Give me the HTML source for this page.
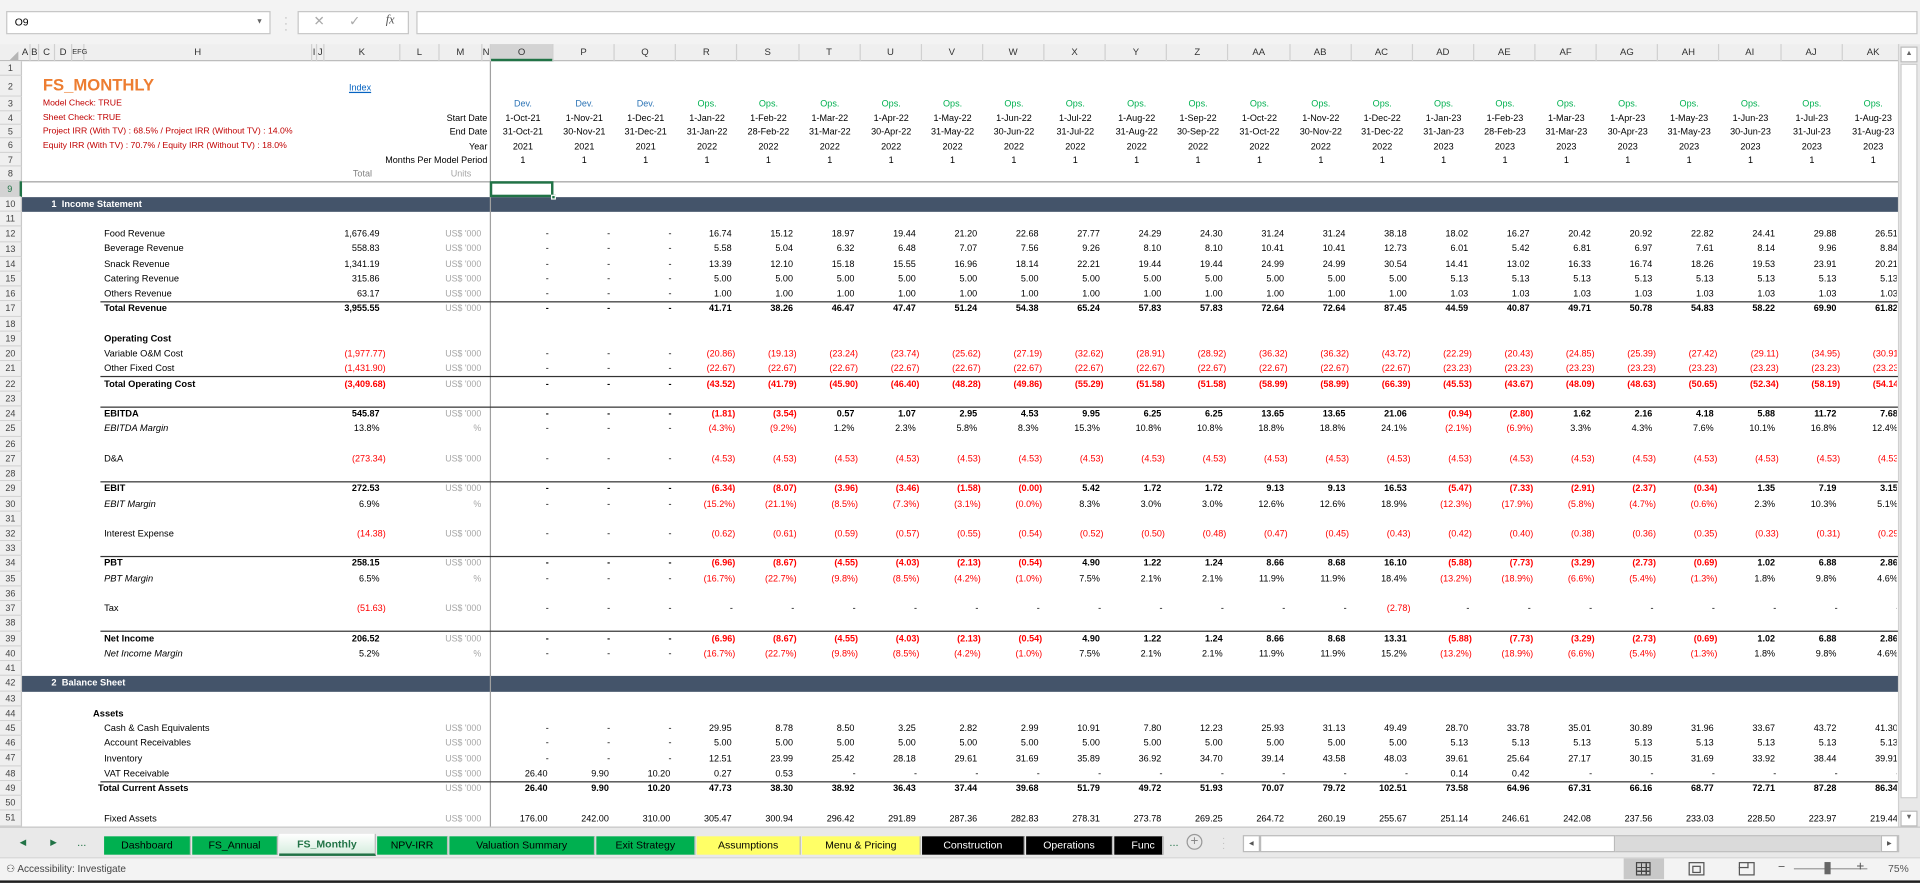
<!DOCTYPE html><html><head><meta charset="utf-8"><style>
*{margin:0;padding:0;box-sizing:border-box}
html,body{width:1920px;height:883px;overflow:hidden;background:#fff}
#w{position:absolute;left:0;top:0;width:1568px;height:721px;transform:scale(1.22449);transform-origin:0 0;font-family:"Liberation Sans",sans-serif;font-size:7.6px;color:#000;overflow:hidden}
.a{position:absolute;white-space:nowrap}
.d{position:absolute;left:402px;display:flex;height:12.24px;line-height:12.24px;width:1147px;overflow:hidden;white-space:nowrap;font-size:7.4px}
.d span,.d em,.d del{display:block;flex:0 0 50.14px;text-align:right;padding-right:5px;font-style:normal;text-decoration:none}
.d em{color:#f00;padding-right:2px}
.d del{padding-right:4px}
.c{height:11.43px;line-height:11.43px}
.c span{text-align:center;padding:0}
.b{font-weight:bold}
.l{position:absolute;left:85px;height:12.24px;line-height:12.24px;white-space:nowrap}
.k{position:absolute;right:1258px;height:12.24px;line-height:12.24px;text-align:right;white-space:nowrap;font-size:7.4px}
.kn{color:#f00;right:1253px}
.u{position:absolute;right:1175px;height:12.24px;line-height:12.24px;color:#a6a6a6;font-size:7.2px;white-space:nowrap}
.ln{position:absolute;left:82px;width:1470px;height:1px;background:#333}
.rh{position:relative;left:0;width:18px;height:12.24px;line-height:12.24px;text-align:center;font-size:7.4px;color:#444;background:#efefef;border-bottom:1px solid #d4d4d4;border-right:1px solid #c8c8c8}
.s{height:11.43px;line-height:11.43px}
.ch{position:absolute;top:36px;height:14px;line-height:14px;text-align:center;font-size:7.8px;color:#333;border-right:1px solid #d0d0d0}
.tab{position:absolute;top:683px;height:15px;line-height:15px;text-align:center;font-size:8.6px;border-right:1px solid #bbb}
.red{color:#c00000;font-size:7.1px;line-height:11.43px}
</style></head><body><div id="w">
<!-- formula bar -->
<div class="a" style="left:0;top:0;width:1568px;height:36px;background:#f3f3f3"></div>
<div class="a" style="left:5px;top:9px;width:216px;height:19px;background:#fff;border:1px solid #c6c6c6;font-size:8.5px;line-height:17px;padding-left:6px">O9</div>
<div class="a" style="left:209px;top:15px;font-size:6px;color:#666">▼</div>
<div class="a" style="left:232px;top:12px;color:#aaa;font-size:9px;line-height:5px">·<br>·<br>·</div>
<div class="a" style="left:243px;top:9px;width:91px;height:19px;background:#fff;border:1px solid #c6c6c6"></div>
<div class="a" style="left:256px;top:11px;font-size:11px;color:#aaa">✕</div>
<div class="a" style="left:285px;top:11px;font-size:11px;color:#aaa">✓</div>
<div class="a" style="left:315px;top:11px;font-size:10px;color:#555;font-style:italic;font-family:'Liberation Serif',serif">fx</div>
<div class="a" style="left:340px;top:9px;width:1226px;height:19px;background:#fff;border:1px solid #c6c6c6"></div>
<!-- column header -->
<div class="a" style="left:0;top:36px;width:1552px;height:14px;background:#efefef;border-bottom:1px solid #bdbdbd"></div>
<div class="a" style="left:401px;top:36px;width:51px;height:14px;background:#d3d3d3;border-bottom:2px solid #217346"></div>
<div class="a" style="left:8px;top:42px;width:0;height:0;border-left:7px solid transparent;border-bottom:7px solid #b5b5b5"></div>
<div class="ch" style="left:17px;width:8px">A</div><div class="ch" style="left:25px;width:7px">B</div><div class="ch" style="left:32px;width:13px">C</div><div class="ch" style="left:45px;width:14px">D</div><div class="ch" style="left:59px;width:10px;font-size:6px">EFG</div><div class="ch" style="left:69px;width:186px">H</div><div class="ch" style="left:255px;width:4px">I</div><div class="ch" style="left:259px;width:6px">J</div><div class="ch" style="left:265px;width:62px">K</div><div class="ch" style="left:327px;width:32px">L</div><div class="ch" style="left:359px;width:35px">M</div><div class="ch" style="left:394px;width:7px">N</div>
<div class="a" style="left:401px;top:36px;display:flex;font-size:7.8px;line-height:14px;color:#333"><span style="width:51px;text-align:center;border-right:1px solid #d0d0d0">O</span><span style="width:50.14px;text-align:center;border-right:1px solid #d0d0d0">P</span><span style="width:50.14px;text-align:center;border-right:1px solid #d0d0d0">Q</span><span style="width:50.14px;text-align:center;border-right:1px solid #d0d0d0">R</span><span style="width:50.14px;text-align:center;border-right:1px solid #d0d0d0">S</span><span style="width:50.14px;text-align:center;border-right:1px solid #d0d0d0">T</span><span style="width:50.14px;text-align:center;border-right:1px solid #d0d0d0">U</span><span style="width:50.14px;text-align:center;border-right:1px solid #d0d0d0">V</span><span style="width:50.14px;text-align:center;border-right:1px solid #d0d0d0">W</span><span style="width:50.14px;text-align:center;border-right:1px solid #d0d0d0">X</span><span style="width:50.14px;text-align:center;border-right:1px solid #d0d0d0">Y</span><span style="width:50.14px;text-align:center;border-right:1px solid #d0d0d0">Z</span><span style="width:50.14px;text-align:center;border-right:1px solid #d0d0d0">AA</span><span style="width:50.14px;text-align:center;border-right:1px solid #d0d0d0">AB</span><span style="width:50.14px;text-align:center;border-right:1px solid #d0d0d0">AC</span><span style="width:50.14px;text-align:center;border-right:1px solid #d0d0d0">AD</span><span style="width:50.14px;text-align:center;border-right:1px solid #d0d0d0">AE</span><span style="width:50.14px;text-align:center;border-right:1px solid #d0d0d0">AF</span><span style="width:50.14px;text-align:center;border-right:1px solid #d0d0d0">AG</span><span style="width:50.14px;text-align:center;border-right:1px solid #d0d0d0">AH</span><span style="width:50.14px;text-align:center;border-right:1px solid #d0d0d0">AI</span><span style="width:50.14px;text-align:center;border-right:1px solid #d0d0d0">AJ</span><span style="width:50.14px;text-align:center">AK</span></div>
<!-- row headers -->
<div class="a" style="left:0;top:49.8px">
<div class="rh" style="height:12.3px;line-height:12.3px">1</div><div class="rh" style="height:17.1px;line-height:17.1px">2</div><div class="rh s">3</div><div class="rh s">4</div><div class="rh s">5</div><div class="rh s">6</div><div class="rh s">7</div><div class="rh s">8</div><div class="rh" style="height:13.1px;line-height:13.1px;background:#d3d3d3;color:#217346;border-right:2px solid #217346">9</div><div class="rh">10</div><div class="rh">11</div><div class="rh">12</div><div class="rh">13</div><div class="rh">14</div><div class="rh">15</div><div class="rh">16</div><div class="rh">17</div><div class="rh">18</div><div class="rh">19</div><div class="rh">20</div><div class="rh">21</div><div class="rh">22</div><div class="rh">23</div><div class="rh">24</div><div class="rh">25</div><div class="rh">26</div><div class="rh">27</div><div class="rh">28</div><div class="rh">29</div><div class="rh">30</div><div class="rh">31</div><div class="rh">32</div><div class="rh">33</div><div class="rh">34</div><div class="rh">35</div><div class="rh">36</div><div class="rh">37</div><div class="rh">38</div><div class="rh">39</div><div class="rh">40</div><div class="rh">41</div><div class="rh">42</div><div class="rh">43</div><div class="rh">44</div><div class="rh">45</div><div class="rh">46</div><div class="rh">47</div><div class="rh">48</div><div class="rh">49</div><div class="rh">50</div><div class="rh">51</div></div>
<!-- section bars -->
<div class="a" style="left:18px;top:160.7px;width:1534px;height:12.24px;background:#44546a;color:#fff;font-weight:bold;font-size:7.6px;line-height:12.24px;padding-left:24px">1&nbsp;&nbsp;Income Statement</div>
<div class="a" style="left:18px;top:552.3px;width:1534px;height:12.24px;background:#44546a;color:#fff;font-weight:bold;font-size:7.6px;line-height:12.24px;padding-left:24px">2&nbsp;&nbsp;Balance Sheet</div>
<!-- freeze lines -->
<div class="a" style="left:18px;top:147.6px;width:1534px;height:1px;background:#a0a0a0"></div>
<div class="a" style="left:400px;top:50px;width:1px;height:625px;background:#a0a0a0"></div>
<!-- selection -->
<div class="a" style="left:400px;top:147.5px;width:52px;height:13.5px;border:2px solid #217346"></div>
<div class="a" style="left:449.5px;top:158.5px;width:4px;height:4px;background:#217346;border:1px solid #fff"></div>
<!-- header texts -->
<div class="a" style="left:35px;top:61.5px;font-size:13.6px;font-weight:bold;color:#ed7d31">FS_MONTHLY</div>
<div class="a" style="left:285px;top:67px;font-size:7.4px;color:#0563c1;text-decoration:underline">Index</div>
<div class="a red" style="left:35px;top:79.2px">Model Check: TRUE<br>Sheet Check: TRUE<br>Project IRR  (With TV) : 68.5%  / Project IRR (Without TV) : 14.0%<br>Equity IRR  (With TV) : 70.7%  / Equity IRR (Without TV) : 18.0%</div>
<div class="a" style="right:1170px;top:90.65px;line-height:11.43px;text-align:right;font-size:7.4px">Start Date<br>End Date<br>Year<br>Months Per Model Period</div>
<div class="a" style="left:265px;top:136.4px;width:62px;text-align:center;color:#808080;font-size:7.4px;line-height:11.43px">Total</div>
<div class="a" style="left:359px;top:136.4px;width:35px;text-align:center;color:#a6a6a6;font-size:7.4px;line-height:11.43px">Units</div>
<div class="d c" style="top:79.2px;color:#00b050"><span style="color:#2e75b6">Dev.</span><span style="color:#2e75b6">Dev.</span><span style="color:#2e75b6">Dev.</span><span>Ops.</span><span>Ops.</span><span>Ops.</span><span>Ops.</span><span>Ops.</span><span>Ops.</span><span>Ops.</span><span>Ops.</span><span>Ops.</span><span>Ops.</span><span>Ops.</span><span>Ops.</span><span>Ops.</span><span>Ops.</span><span>Ops.</span><span>Ops.</span><span>Ops.</span><span>Ops.</span><span>Ops.</span><span>Ops.</span></div>
<div class="d c" style="top:90.65px"><span>1-Oct-21</span><span>1-Nov-21</span><span>1-Dec-21</span><span>1-Jan-22</span><span>1-Feb-22</span><span>1-Mar-22</span><span>1-Apr-22</span><span>1-May-22</span><span>1-Jun-22</span><span>1-Jul-22</span><span>1-Aug-22</span><span>1-Sep-22</span><span>1-Oct-22</span><span>1-Nov-22</span><span>1-Dec-22</span><span>1-Jan-23</span><span>1-Feb-23</span><span>1-Mar-23</span><span>1-Apr-23</span><span>1-May-23</span><span>1-Jun-23</span><span>1-Jul-23</span><span>1-Aug-23</span></div>
<div class="d c" style="top:102.1px"><span>31-Oct-21</span><span>30-Nov-21</span><span>31-Dec-21</span><span>31-Jan-22</span><span>28-Feb-22</span><span>31-Mar-22</span><span>30-Apr-22</span><span>31-May-22</span><span>30-Jun-22</span><span>31-Jul-22</span><span>31-Aug-22</span><span>30-Sep-22</span><span>31-Oct-22</span><span>30-Nov-22</span><span>31-Dec-22</span><span>31-Jan-23</span><span>28-Feb-23</span><span>31-Mar-23</span><span>30-Apr-23</span><span>31-May-23</span><span>30-Jun-23</span><span>31-Jul-23</span><span>31-Aug-23</span></div>
<div class="d c" style="top:113.5px"><span>2021</span><span>2021</span><span>2021</span><span>2022</span><span>2022</span><span>2022</span><span>2022</span><span>2022</span><span>2022</span><span>2022</span><span>2022</span><span>2022</span><span>2022</span><span>2022</span><span>2022</span><span>2023</span><span>2023</span><span>2023</span><span>2023</span><span>2023</span><span>2023</span><span>2023</span><span>2023</span></div>
<div class="d c" style="top:124.95px"><span>1</span><span>1</span><span>1</span><span>1</span><span>1</span><span>1</span><span>1</span><span>1</span><span>1</span><span>1</span><span>1</span><span>1</span><span>1</span><span>1</span><span>1</span><span>1</span><span>1</span><span>1</span><span>1</span><span>1</span><span>1</span><span>1</span><span>1</span></div>
<!-- lines above totals -->
<div class="ln" style="top:246px"></div><div class="ln" style="top:307.3px"></div><div class="ln" style="top:331.8px"></div><div class="ln" style="top:393px"></div><div class="ln" style="top:454.2px"></div><div class="ln" style="top:515.4px"></div><div class="ln" style="top:637.8px"></div>
<!-- Income statement labels -->
<div class="l" style="top:185.1px">Food Revenue</div><div class="k" style="top:185.1px">1,676.49</div><div class="u" style="top:185.1px">US$ '000</div>
<div class="l" style="top:197.4px">Beverage Revenue</div><div class="k" style="top:197.4px">558.83</div><div class="u" style="top:197.4px">US$ '000</div>
<div class="l" style="top:209.6px">Snack Revenue</div><div class="k" style="top:209.6px">1,341.19</div><div class="u" style="top:209.6px">US$ '000</div>
<div class="l" style="top:221.9px">Catering Revenue</div><div class="k" style="top:221.9px">315.86</div><div class="u" style="top:221.9px">US$ '000</div>
<div class="l" style="top:234.1px">Others Revenue</div><div class="k" style="top:234.1px">63.17</div><div class="u" style="top:234.1px">US$ '000</div>
<div class="l b" style="top:246.3px">Total Revenue</div><div class="k b" style="top:246.3px">3,955.55</div><div class="u" style="top:246.3px">US$ '000</div>
<div class="l b" style="top:270.8px">Operating Cost</div>
<div class="l" style="top:283.1px">Variable O&amp;M Cost</div><div class="k kn" style="top:283.1px">(1,977.77)</div><div class="u" style="top:283.1px">US$ '000</div>
<div class="l" style="top:295.3px">Other Fixed Cost</div><div class="k kn" style="top:295.3px">(1,431.90)</div><div class="u" style="top:295.3px">US$ '000</div>
<div class="l b" style="top:307.5px">Total Operating Cost</div><div class="k kn b" style="top:307.5px">(3,409.68)</div><div class="u" style="top:307.5px">US$ '000</div>
<div class="l b" style="top:332px">EBITDA</div><div class="k b" style="top:332px">545.87</div><div class="u" style="top:332px">US$ '000</div>
<div class="l" style="top:344.3px;font-style:italic">EBITDA Margin</div><div class="k" style="top:344.3px">13.8%</div><div class="u" style="top:344.3px">%</div>
<div class="l" style="top:368.7px">D&amp;A</div><div class="k kn" style="top:368.7px">(273.34)</div><div class="u" style="top:368.7px">US$ '000</div>
<div class="l b" style="top:393.2px">EBIT</div><div class="k b" style="top:393.2px">272.53</div><div class="u" style="top:393.2px">US$ '000</div>
<div class="l" style="top:405.5px;font-style:italic">EBIT Margin</div><div class="k" style="top:405.5px">6.9%</div><div class="u" style="top:405.5px">%</div>
<div class="l" style="top:429.9px">Interest Expense</div><div class="k kn" style="top:429.9px">(14.38)</div><div class="u" style="top:429.9px">US$ '000</div>
<div class="l b" style="top:454.4px">PBT</div><div class="k b" style="top:454.4px">258.15</div><div class="u" style="top:454.4px">US$ '000</div>
<div class="l" style="top:466.7px;font-style:italic">PBT Margin</div><div class="k" style="top:466.7px">6.5%</div><div class="u" style="top:466.7px">%</div>
<div class="l" style="top:491.1px">Tax</div><div class="k kn" style="top:491.1px">(51.63)</div><div class="u" style="top:491.1px">US$ '000</div>
<div class="l b" style="top:515.6px">Net Income</div><div class="k b" style="top:515.6px">206.52</div><div class="u" style="top:515.6px">US$ '000</div>
<div class="l" style="top:527.9px;font-style:italic">Net Income Margin</div><div class="k" style="top:527.9px">5.2%</div><div class="u" style="top:527.9px">%</div>
<div class="l b" style="top:576.8px;left:76px">Assets</div>
<div class="l" style="top:589.1px">Cash &amp; Cash Equivalents</div><div class="u" style="top:589.1px">US$ '000</div>
<div class="l" style="top:601.3px">Account Receivables</div><div class="u" style="top:601.3px">US$ '000</div>
<div class="l" style="top:613.5px">Inventory</div><div class="u" style="top:613.5px">US$ '000</div>
<div class="l" style="top:625.8px">VAT Receivable</div><div class="u" style="top:625.8px">US$ '000</div>
<div class="l b" style="top:638px;left:80px">Total Current Assets</div><div class="u" style="top:638px">US$ '000</div>
<div class="l" style="top:662.5px">Fixed Assets</div><div class="u" style="top:662.5px">US$ '000</div>
<!-- data rows -->
<div class="d" style="top:185.1px"><del>-</del><del>-</del><del>-</del><span>16.74</span><span>15.12</span><span>18.97</span><span>19.44</span><span>21.20</span><span>22.68</span><span>27.77</span><span>24.29</span><span>24.30</span><span>31.24</span><span>31.24</span><span>38.18</span><span>18.02</span><span>16.27</span><span>20.42</span><span>20.92</span><span>22.82</span><span>24.41</span><span>29.88</span><span>26.51</span></div>
<div class="d" style="top:197.4px"><del>-</del><del>-</del><del>-</del><span>5.58</span><span>5.04</span><span>6.32</span><span>6.48</span><span>7.07</span><span>7.56</span><span>9.26</span><span>8.10</span><span>8.10</span><span>10.41</span><span>10.41</span><span>12.73</span><span>6.01</span><span>5.42</span><span>6.81</span><span>6.97</span><span>7.61</span><span>8.14</span><span>9.96</span><span>8.84</span></div>
<div class="d" style="top:209.6px"><del>-</del><del>-</del><del>-</del><span>13.39</span><span>12.10</span><span>15.18</span><span>15.55</span><span>16.96</span><span>18.14</span><span>22.21</span><span>19.44</span><span>19.44</span><span>24.99</span><span>24.99</span><span>30.54</span><span>14.41</span><span>13.02</span><span>16.33</span><span>16.74</span><span>18.26</span><span>19.53</span><span>23.91</span><span>20.21</span></div>
<div class="d" style="top:221.9px"><del>-</del><del>-</del><del>-</del><span>5.00</span><span>5.00</span><span>5.00</span><span>5.00</span><span>5.00</span><span>5.00</span><span>5.00</span><span>5.00</span><span>5.00</span><span>5.00</span><span>5.00</span><span>5.00</span><span>5.13</span><span>5.13</span><span>5.13</span><span>5.13</span><span>5.13</span><span>5.13</span><span>5.13</span><span>5.13</span></div>
<div class="d" style="top:234.1px"><del>-</del><del>-</del><del>-</del><span>1.00</span><span>1.00</span><span>1.00</span><span>1.00</span><span>1.00</span><span>1.00</span><span>1.00</span><span>1.00</span><span>1.00</span><span>1.00</span><span>1.00</span><span>1.00</span><span>1.03</span><span>1.03</span><span>1.03</span><span>1.03</span><span>1.03</span><span>1.03</span><span>1.03</span><span>1.03</span></div>
<div class="d b" style="top:246.3px"><del>-</del><del>-</del><del>-</del><span>41.71</span><span>38.26</span><span>46.47</span><span>47.47</span><span>51.24</span><span>54.38</span><span>65.24</span><span>57.83</span><span>57.83</span><span>72.64</span><span>72.64</span><span>87.45</span><span>44.59</span><span>40.87</span><span>49.71</span><span>50.78</span><span>54.83</span><span>58.22</span><span>69.90</span><span>61.82</span></div>
<div class="d" style="top:283.1px"><del>-</del><del>-</del><del>-</del><em>(20.86)</em><em>(19.13)</em><em>(23.24)</em><em>(23.74)</em><em>(25.62)</em><em>(27.19)</em><em>(32.62)</em><em>(28.91)</em><em>(28.92)</em><em>(36.32)</em><em>(36.32)</em><em>(43.72)</em><em>(22.29)</em><em>(20.43)</em><em>(24.85)</em><em>(25.39)</em><em>(27.42)</em><em>(29.11)</em><em>(34.95)</em><em>(30.91)</em></div>
<div class="d" style="top:295.3px"><del>-</del><del>-</del><del>-</del><em>(22.67)</em><em>(22.67)</em><em>(22.67)</em><em>(22.67)</em><em>(22.67)</em><em>(22.67)</em><em>(22.67)</em><em>(22.67)</em><em>(22.67)</em><em>(22.67)</em><em>(22.67)</em><em>(22.67)</em><em>(23.23)</em><em>(23.23)</em><em>(23.23)</em><em>(23.23)</em><em>(23.23)</em><em>(23.23)</em><em>(23.23)</em><em>(23.23)</em></div>
<div class="d b" style="top:307.5px"><del>-</del><del>-</del><del>-</del><em>(43.52)</em><em>(41.79)</em><em>(45.90)</em><em>(46.40)</em><em>(48.28)</em><em>(49.86)</em><em>(55.29)</em><em>(51.58)</em><em>(51.58)</em><em>(58.99)</em><em>(58.99)</em><em>(66.39)</em><em>(45.53)</em><em>(43.67)</em><em>(48.09)</em><em>(48.63)</em><em>(50.65)</em><em>(52.34)</em><em>(58.19)</em><em>(54.14)</em></div>
<div class="d b" style="top:332px"><del>-</del><del>-</del><del>-</del><em>(1.81)</em><em>(3.54)</em><span>0.57</span><span>1.07</span><span>2.95</span><span>4.53</span><span>9.95</span><span>6.25</span><span>6.25</span><span>13.65</span><span>13.65</span><span>21.06</span><em>(0.94)</em><em>(2.80)</em><span>1.62</span><span>2.16</span><span>4.18</span><span>5.88</span><span>11.72</span><span>7.68</span></div>
<div class="d" style="top:344.3px"><del>-</del><del>-</del><del>-</del><em>(4.3%)</em><em>(9.2%)</em><span>1.2%</span><span>2.3%</span><span>5.8%</span><span>8.3%</span><span>15.3%</span><span>10.8%</span><span>10.8%</span><span>18.8%</span><span>18.8%</span><span>24.1%</span><em>(2.1%)</em><em>(6.9%)</em><span>3.3%</span><span>4.3%</span><span>7.6%</span><span>10.1%</span><span>16.8%</span><span>12.4%</span></div>
<div class="d" style="top:368.7px"><del>-</del><del>-</del><del>-</del><em>(4.53)</em><em>(4.53)</em><em>(4.53)</em><em>(4.53)</em><em>(4.53)</em><em>(4.53)</em><em>(4.53)</em><em>(4.53)</em><em>(4.53)</em><em>(4.53)</em><em>(4.53)</em><em>(4.53)</em><em>(4.53)</em><em>(4.53)</em><em>(4.53)</em><em>(4.53)</em><em>(4.53)</em><em>(4.53)</em><em>(4.53)</em><em>(4.53)</em></div>
<div class="d b" style="top:393.2px"><del>-</del><del>-</del><del>-</del><em>(6.34)</em><em>(8.07)</em><em>(3.96)</em><em>(3.46)</em><em>(1.58)</em><em>(0.00)</em><span>5.42</span><span>1.72</span><span>1.72</span><span>9.13</span><span>9.13</span><span>16.53</span><em>(5.47)</em><em>(7.33)</em><em>(2.91)</em><em>(2.37)</em><em>(0.34)</em><span>1.35</span><span>7.19</span><span>3.15</span></div>
<div class="d" style="top:405.5px"><del>-</del><del>-</del><del>-</del><em>(15.2%)</em><em>(21.1%)</em><em>(8.5%)</em><em>(7.3%)</em><em>(3.1%)</em><em>(0.0%)</em><span>8.3%</span><span>3.0%</span><span>3.0%</span><span>12.6%</span><span>12.6%</span><span>18.9%</span><em>(12.3%)</em><em>(17.9%)</em><em>(5.8%)</em><em>(4.7%)</em><em>(0.6%)</em><span>2.3%</span><span>10.3%</span><span>5.1%</span></div>
<div class="d" style="top:429.9px"><del>-</del><del>-</del><del>-</del><em>(0.62)</em><em>(0.61)</em><em>(0.59)</em><em>(0.57)</em><em>(0.55)</em><em>(0.54)</em><em>(0.52)</em><em>(0.50)</em><em>(0.48)</em><em>(0.47)</em><em>(0.45)</em><em>(0.43)</em><em>(0.42)</em><em>(0.40)</em><em>(0.38)</em><em>(0.36)</em><em>(0.35)</em><em>(0.33)</em><em>(0.31)</em><em>(0.29)</em></div>
<div class="d b" style="top:454.4px"><del>-</del><del>-</del><del>-</del><em>(6.96)</em><em>(8.67)</em><em>(4.55)</em><em>(4.03)</em><em>(2.13)</em><em>(0.54)</em><span>4.90</span><span>1.22</span><span>1.24</span><span>8.66</span><span>8.68</span><span>16.10</span><em>(5.88)</em><em>(7.73)</em><em>(3.29)</em><em>(2.73)</em><em>(0.69)</em><span>1.02</span><span>6.88</span><span>2.86</span></div>
<div class="d" style="top:466.7px"><del>-</del><del>-</del><del>-</del><em>(16.7%)</em><em>(22.7%)</em><em>(9.8%)</em><em>(8.5%)</em><em>(4.2%)</em><em>(1.0%)</em><span>7.5%</span><span>2.1%</span><span>2.1%</span><span>11.9%</span><span>11.9%</span><span>18.4%</span><em>(13.2%)</em><em>(18.9%)</em><em>(6.6%)</em><em>(5.4%)</em><em>(1.3%)</em><span>1.8%</span><span>9.8%</span><span>4.6%</span></div>
<div class="d" style="top:491.1px"><del>-</del><del>-</del><del>-</del><del>-</del><del>-</del><del>-</del><del>-</del><del>-</del><del>-</del><del>-</del><del>-</del><del>-</del><del>-</del><del>-</del><em>(2.78)</em><del>-</del><del>-</del><del>-</del><del>-</del><del>-</del><del>-</del><del>-</del><del>-</del></div>
<div class="d b" style="top:515.6px"><del>-</del><del>-</del><del>-</del><em>(6.96)</em><em>(8.67)</em><em>(4.55)</em><em>(4.03)</em><em>(2.13)</em><em>(0.54)</em><span>4.90</span><span>1.22</span><span>1.24</span><span>8.66</span><span>8.68</span><span>13.31</span><em>(5.88)</em><em>(7.73)</em><em>(3.29)</em><em>(2.73)</em><em>(0.69)</em><span>1.02</span><span>6.88</span><span>2.86</span></div>
<div class="d" style="top:527.9px"><del>-</del><del>-</del><del>-</del><em>(16.7%)</em><em>(22.7%)</em><em>(9.8%)</em><em>(8.5%)</em><em>(4.2%)</em><em>(1.0%)</em><span>7.5%</span><span>2.1%</span><span>2.1%</span><span>11.9%</span><span>11.9%</span><span>15.2%</span><em>(13.2%)</em><em>(18.9%)</em><em>(6.6%)</em><em>(5.4%)</em><em>(1.3%)</em><span>1.8%</span><span>9.8%</span><span>4.6%</span></div>
<div class="d" style="top:589.1px"><del>-</del><del>-</del><del>-</del><span>29.95</span><span>8.78</span><span>8.50</span><span>3.25</span><span>2.82</span><span>2.99</span><span>10.91</span><span>7.80</span><span>12.23</span><span>25.93</span><span>31.13</span><span>49.49</span><span>28.70</span><span>33.78</span><span>35.01</span><span>30.89</span><span>31.96</span><span>33.67</span><span>43.72</span><span>41.30</span></div>
<div class="d" style="top:601.3px"><del>-</del><del>-</del><del>-</del><span>5.00</span><span>5.00</span><span>5.00</span><span>5.00</span><span>5.00</span><span>5.00</span><span>5.00</span><span>5.00</span><span>5.00</span><span>5.00</span><span>5.00</span><span>5.00</span><span>5.13</span><span>5.13</span><span>5.13</span><span>5.13</span><span>5.13</span><span>5.13</span><span>5.13</span><span>5.13</span></div>
<div class="d" style="top:613.5px"><del>-</del><del>-</del><del>-</del><span>12.51</span><span>23.99</span><span>25.42</span><span>28.18</span><span>29.61</span><span>31.69</span><span>35.89</span><span>36.92</span><span>34.70</span><span>39.14</span><span>43.58</span><span>48.03</span><span>39.61</span><span>25.64</span><span>27.17</span><span>30.15</span><span>31.69</span><span>33.92</span><span>38.44</span><span>39.91</span></div>
<div class="d" style="top:625.8px"><span>26.40</span><span>9.90</span><span>10.20</span><span>0.27</span><span>0.53</span><del>-</del><del>-</del><del>-</del><del>-</del><del>-</del><del>-</del><del>-</del><del>-</del><del>-</del><del>-</del><span>0.14</span><span>0.42</span><del>-</del><del>-</del><del>-</del><del>-</del><del>-</del><del>-</del></div>
<div class="d b" style="top:638px"><span>26.40</span><span>9.90</span><span>10.20</span><span>47.73</span><span>38.30</span><span>38.92</span><span>36.43</span><span>37.44</span><span>39.68</span><span>51.79</span><span>49.72</span><span>51.93</span><span>70.07</span><span>79.72</span><span>102.51</span><span>73.58</span><span>64.96</span><span>67.31</span><span>66.16</span><span>68.77</span><span>72.71</span><span>87.28</span><span>86.34</span></div>
<div class="d" style="top:662.5px"><span>176.00</span><span>242.00</span><span>310.00</span><span>305.47</span><span>300.94</span><span>296.42</span><span>291.89</span><span>287.36</span><span>282.83</span><span>278.31</span><span>273.78</span><span>269.25</span><span>264.72</span><span>260.19</span><span>255.67</span><span>251.14</span><span>246.61</span><span>242.08</span><span>237.56</span><span>233.03</span><span>228.50</span><span>223.97</span><span>219.44</span></div>
<!-- vertical scrollbar -->
<div class="a" style="left:1550px;top:36px;width:18px;height:640px;background:#e8e8e8;border-left:1px solid #d0d0d0"></div>
<div class="a" style="left:1552px;top:38px;width:14px;height:13px;background:#fff;border:1px solid #bbb;font-size:6px;text-align:center;line-height:11px;color:#666">▲</div>
<div class="a" style="left:1552px;top:52px;width:14px;height:600px;background:#fff;border:1px solid #ccc"></div>
<div class="a" style="left:1552px;top:662px;width:14px;height:13px;background:#fff;border:1px solid #bbb;font-size:6px;text-align:center;line-height:11px;color:#666">▼</div>
<!-- tab bar -->
<div class="a" style="left:0;top:675px;width:1568px;height:25px;background:#e9e9e9;border-top:1px solid #c6c6c6"></div>
<div class="a" style="left:16px;top:684px;font-size:7px;color:#217346">◀</div>
<div class="a" style="left:41px;top:684px;font-size:7px;color:#217346">▶</div>
<div class="a" style="left:63px;top:683px;font-size:9px;color:#217346">...</div>
<div class="tab" style="left:85px;width:71px;background:#00b050">Dashboard</div>
<div class="tab" style="left:157px;width:70px;background:#00b050">FS_Annual</div>
<div class="tab" style="left:228px;width:79px;top:681px;height:18px;line-height:17px;background:linear-gradient(#fff,#d7eedf);color:#217346;font-weight:bold;border-bottom:2px solid #217346">FS_Monthly</div>
<div class="tab" style="left:308px;width:58px;background:#00b050">NPV-IRR</div>
<div class="tab" style="left:367px;width:119px;background:#00b050">Valuation Summary</div>
<div class="tab" style="left:487px;width:81px;background:#00b050">Exit Strategy</div>
<div class="tab" style="left:569px;width:85px;background:#ffff66">Assumptions</div>
<div class="tab" style="left:655px;width:97px;background:#ffff66">Menu &amp; Pricing</div>
<div class="tab" style="left:753px;width:84px;background:#000;color:#fff">Construction</div>
<div class="tab" style="left:838px;width:71px;background:#000;color:#fff">Operations</div>
<div class="tab" style="left:910px;width:40px;background:#000;color:#fff;text-align:left;padding-left:14px;overflow:hidden">Func</div>
<div class="a" style="left:955px;top:683px;font-size:9px;color:#217346">...</div>
<div class="a" style="left:969px;top:681px;width:13px;height:13px;border:1px solid #999;border-radius:50%;text-align:center;line-height:11px;font-size:11px;color:#888">+</div>
<div class="a" style="left:998px;top:683px;color:#bbb;font-size:8px;line-height:4px">·<br>·<br>·</div>
<div class="a" style="left:1015px;top:682px;width:536px;height:14px;background:#dadada;border:1px solid #c0c0c0"></div>
<div class="a" style="left:1015px;top:682px;width:14px;height:14px;background:#fff;border:1px solid #bbb;font-size:5px;text-align:center;line-height:12px;color:#555">◀</div>
<div class="a" style="left:1029px;top:682px;width:290px;height:14px;background:#fff;border:1px solid #bbb"></div>
<div class="a" style="left:1536px;top:682px;width:14px;height:14px;background:#fff;border:1px solid #bbb;font-size:5px;text-align:center;line-height:12px;color:#555">▶</div>
<!-- status bar -->
<div class="a" style="left:0;top:700px;width:1568px;height:19px;background:#f3f3f3;border-top:1px solid #d6d6d6"></div>
<div class="a" style="left:5px;top:704px;font-size:8.2px;color:#444">⚇ Accessibility: Investigate</div>
<div class="a" style="left:1326px;top:701px;width:33px;height:17px;background:#c8c8c8"></div>
<div class="a" style="left:1336px;top:704px;width:12px;height:11px;border:1px solid #444;background:linear-gradient(90deg,transparent 3px,#444 3px,#444 4px,transparent 4px,transparent 7px,#444 7px,#444 8px,transparent 8px),linear-gradient(transparent 3px,#444 3px,#444 4px,transparent 4px,transparent 6px,#444 6px,#444 7px,transparent 7px)"></div>
<div class="a" style="left:1379px;top:704px;width:13px;height:11px;border:1px solid #555"></div>
<div class="a" style="left:1382px;top:706.5px;width:7px;height:6px;border:1px solid #555"></div>
<div class="a" style="left:1420px;top:704px;width:13px;height:11px;border:1px solid #555"></div>
<div class="a" style="left:1420px;top:704px;width:8px;height:5px;border-right:1px solid #555;border-bottom:1px solid #555"></div>
<div class="a" style="left:1452px;top:703px;font-size:10px;color:#555">−</div>
<div class="a" style="left:1465px;top:709px;width:60px;height:1px;background:#999"></div>
<div class="a" style="left:1490px;top:704px;width:5px;height:10px;background:#666"></div>
<div class="a" style="left:1516px;top:702px;font-size:11px;color:#555">+</div>
<div class="a" style="left:1542px;top:704px;font-size:8.4px;color:#555">75%</div>
<div class="a" style="left:0;top:719px;width:1568px;height:3px;background:#1f1f1f"></div>
</div></body></html>
